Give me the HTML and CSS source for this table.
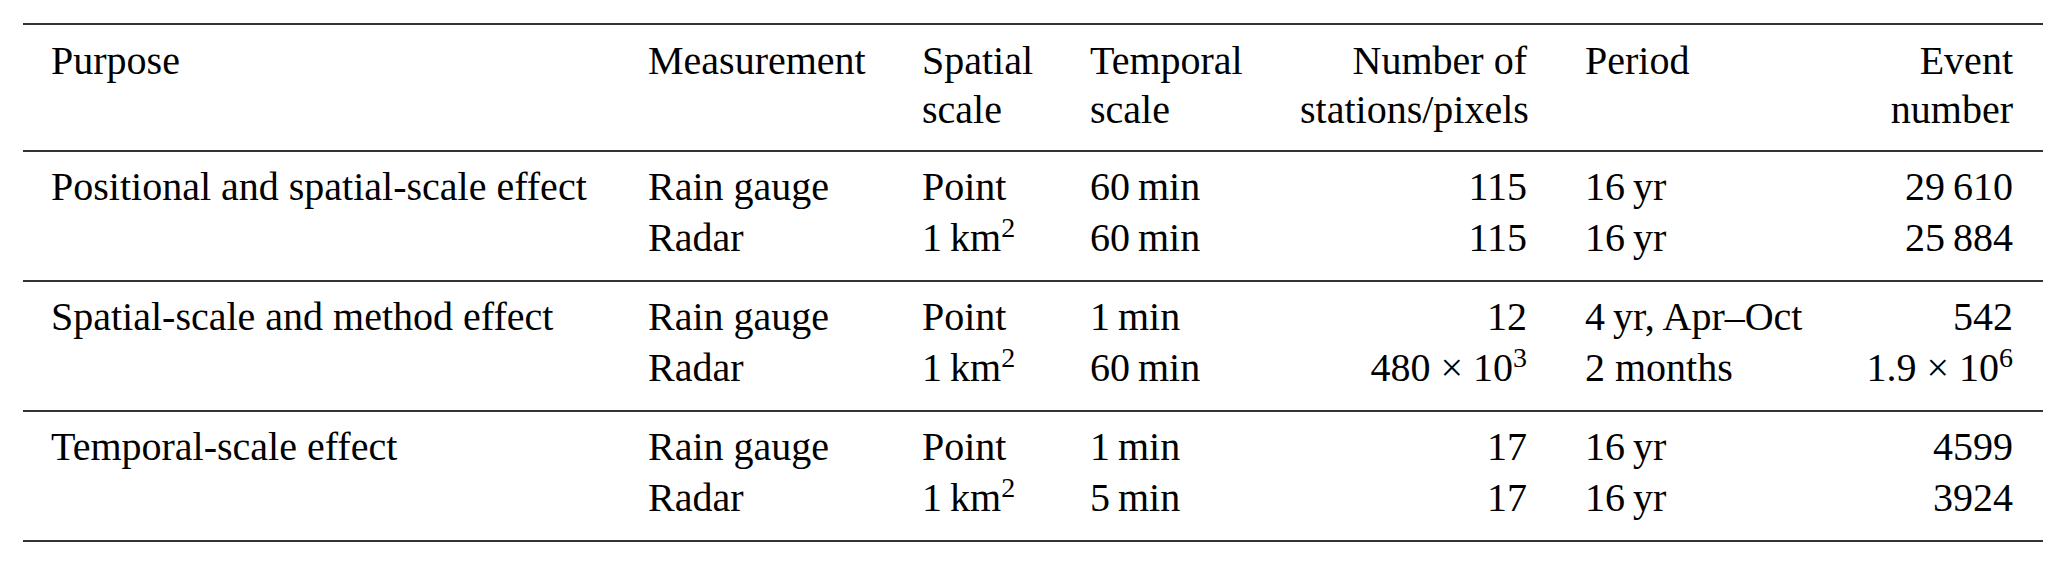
FILE: index.html
```
<!DOCTYPE html>
<html lang="en">
<head>
<meta charset="utf-8">
<title>Table</title>
<link rel="stylesheet" href="styles.css">
</head>
<body>
<table class="data">
  <colgroup>
    <col class="c-purpose">
    <col class="c-meas">
    <col class="c-spatial">
    <col class="c-temporal">
    <col class="c-number">
    <col class="c-period">
    <col class="c-event">
  </colgroup>
  <thead>
    <tr>
      <th class="first">Purpose</th>
      <th>Measurement</th>
      <th>Spatial<br>scale</th>
      <th>Temporal<br>scale</th>
      <th class="num">Number of<br>stations/pixels</th>
      <th class="period">Period</th>
      <th class="num last">Event<br>number</th>
    </tr>
  </thead>
  <tbody>
    <tr class="top">
      <td class="first">Positional and spatial-scale effect</td>
      <td>Rain gauge</td>
      <td>Point</td>
      <td>60&#8201;min</td>
      <td class="num">115</td>
      <td class="period">16&#8201;yr</td>
      <td class="num last">29&#8201;610</td>
    </tr>
    <tr class="bottom">
      <td class="first"></td>
      <td>Radar</td>
      <td>1&#8201;km<sup>2</sup></td>
      <td>60&#8201;min</td>
      <td class="num">115</td>
      <td class="period">16&#8201;yr</td>
      <td class="num last">25&#8201;884</td>
    </tr>
  </tbody>
  <tbody>
    <tr class="top">
      <td class="first">Spatial-scale and method effect</td>
      <td>Rain gauge</td>
      <td>Point</td>
      <td>1&#8201;min</td>
      <td class="num">12</td>
      <td class="period">4&#8201;yr, Apr–Oct</td>
      <td class="num last">542</td>
    </tr>
    <tr class="bottom">
      <td class="first"></td>
      <td>Radar</td>
      <td>1&#8201;km<sup>2</sup></td>
      <td>60&#8201;min</td>
      <td class="num">480 × 10<sup>3</sup></td>
      <td class="period">2 months</td>
      <td class="num last">1.9 × 10<sup>6</sup></td>
    </tr>
  </tbody>
  <tbody>
    <tr class="top">
      <td class="first">Temporal-scale effect</td>
      <td>Rain gauge</td>
      <td>Point</td>
      <td>1&#8201;min</td>
      <td class="num">17</td>
      <td class="period">16&#8201;yr</td>
      <td class="num last">4599</td>
    </tr>
    <tr class="bottom">
      <td class="first"></td>
      <td>Radar</td>
      <td>1&#8201;km<sup>2</sup></td>
      <td>5&#8201;min</td>
      <td class="num">17</td>
      <td class="period">16&#8201;yr</td>
      <td class="num last">3924</td>
    </tr>
  </tbody>
</table>
</body>
</html>
```
FILE: styles.css
```
html, body {
  margin: 0;
  padding: 0;
  background: #ffffff;
}

body {
  font-family: "Liberation Serif", "Times New Roman", serif;
  font-size: 40px;
  color: #000000;
}

.data {
  margin: 23px 0 0 23px;
  width: 2020px;
  table-layout: fixed;
  border-collapse: collapse;
  border-top: 2px solid #333333;
  border-bottom: 2px solid #333333;
}

.c-purpose { width: 625px; }
.c-meas { width: 274px; }
.c-spatial { width: 168px; }
.c-temporal { width: 210px; }
.c-number { width: 227px; }
.c-period { width: 303px; }
.c-event { width: 213px; }

.data th,
.data td {
  padding: 0;
  text-align: left;
  vertical-align: top;
  white-space: nowrap;
  font-weight: normal;
}

.data thead th {
  line-height: 49px;
  padding-top: 11px;
  padding-bottom: 16px;
}

.data thead tr {
  border-bottom: 2px solid #333333;
}

.data tbody {
  border-top: 2px solid #333333;
}

.data tbody td {
  line-height: 51px;
}

.data tr.top td {
  padding-top: 9px;
}

.data tr.bottom td {
  padding-bottom: 17px;
}

.data .first {
  padding-left: 28px;
}

.data .num {
  text-align: right;
}

.data .period {
  padding-left: 58px;
}

.data .last {
  padding-right: 30px;
}

.data sup {
  font-size: 28px;
  line-height: 0;
  vertical-align: 14px;
}
```
